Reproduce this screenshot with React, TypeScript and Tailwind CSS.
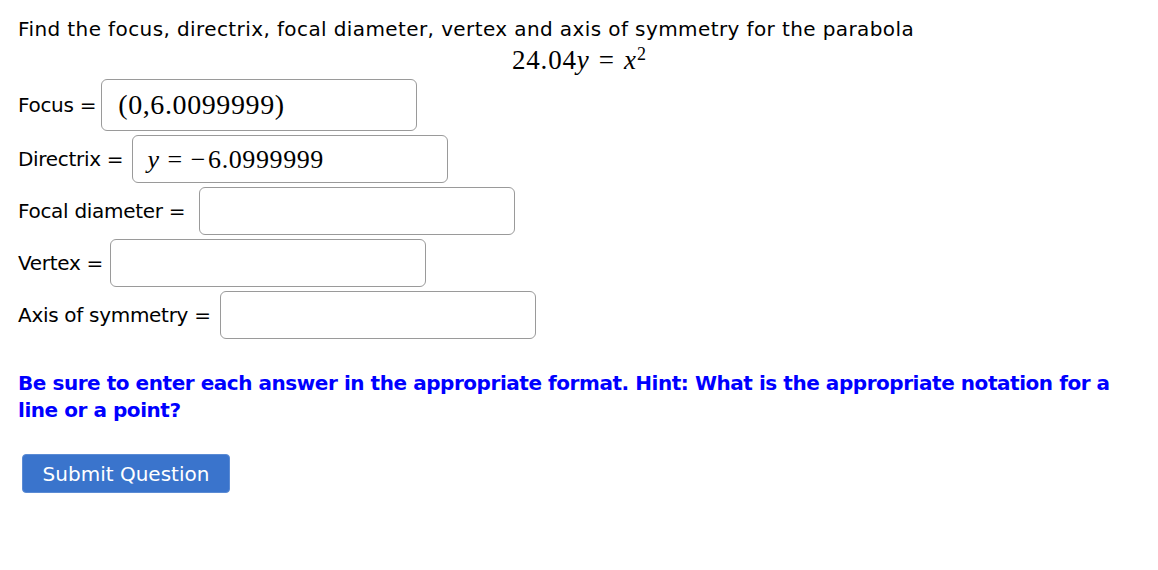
import React from "react";

function Row({ label, children, h = "h-[48px]", ml }: { label: string; children?: React.ReactNode; h?: string; ml: string }) {
  return (
    <div className="flex items-center">
      <span className="text-[20px] text-black whitespace-pre tracking-[-0.3px]">{label} = </span>
      <div className={`${ml} w-[316px] ${h} rounded-[6px] border border-[#9a9a9a] flex items-center px-[14px] bg-white`}>
        {children}
      </div>
    </div>
  );
}

export default function App() {
  return (
    <div className="bg-white w-[1158px] h-[570px] pl-[18px] pt-[16px] text-black font-['DejaVu_Sans',sans-serif]">
      <p className="text-[20px] leading-[26px] tracking-[0.4px]">Find the focus, directrix, focal diameter, vertex and axis of symmetry for the parabola</p>
      <div className="text-center pr-[18px] pt-[3px] font-['Liberation_Serif',serif] text-[27px] leading-[30px]">
        <span className="tracking-[0.8px]">24.04</span><i>y</i>
        <span className="mx-[10px]">=</span>
        <i>x</i><sup className="text-[18px] -top-[9px] ml-[1px]">2</sup>
      </div>
      <div className="mt-[4px] flex flex-col gap-[4px]">
        <Row label="Focus" h="h-[52px]" ml="-ml-[1px]">
          <span className="font-['Liberation_Serif',serif] text-[28px] tracking-[0.6px] pl-[2px]">(0,6.0099999)</span>
        </Row>
        <Row label="Directrix" ml="ml-[3px]">
          <span className="font-['Liberation_Serif',serif] text-[26px] tracking-[0.6px]">
            <i>y</i>
            <span className="mx-[8px]">=</span>
            <span className="mr-[2px]">−</span>6.0999999
          </span>
        </Row>
        <Row label="Focal diameter" ml="ml-[8px]" />
        <Row label="Vertex" ml="ml-[1px]" />
        <Row label="Axis of symmetry" ml="ml-[3px]" />
      </div>
      <p className="mt-[31px] w-[1100px] text-[20px] leading-[27px] font-bold text-[#0000ff] tracking-[-0.45px]">
        Be sure to enter each answer in the appropriate format. Hint: What is the appropriate notation for a line or a point?
      </p>
      <button className="mt-[30px] ml-[4px] h-[39px] w-[208px] rounded-[4px] bg-[#3a74cc] border border-[#5b8bd4] text-white text-[20px]">
        Submit Question
      </button>
    </div>
  );
}
